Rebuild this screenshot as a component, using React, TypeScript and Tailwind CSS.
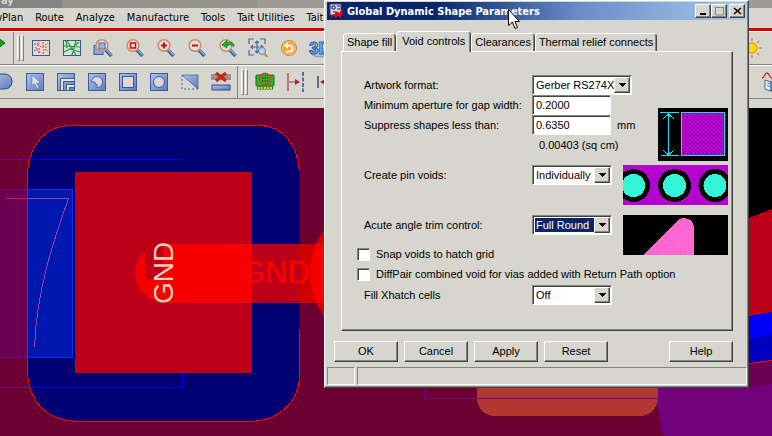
import type { ReactNode } from "react";

const RAISED =
  "border border-t-white border-l-white border-b-[#424242] border-r-[#424242] shadow-[inset_-1px_-1px_0_#848484]";
const SUNKEN =
  "border border-t-[#848484] border-l-[#848484] border-b-white border-r-white shadow-[inset_1px_1px_0_#424242]";

const MENU_ITEMS = ["Route", "Analyze", "Manufacture", "Tools", "Tait Utilities", "Tait C"];

export default function App() {
  return (
    <div className="relative flex h-screen flex-col overflow-hidden bg-[#6b0031] font-['Liberation_Sans',Arial,sans-serif] text-[11px] text-black">
      <header className="shrink-0 bg-[#d6d6ce]">
        <div className="flex h-2 overflow-hidden bg-[#9c9c94]">
          <span className="w-[62px] bg-[#848484] pl-px font-['DejaVu_Sans_Condensed','DejaVu_Sans',sans-serif] text-[11px] leading-[2px] font-bold text-[#d6d6ce]">
            ay
          </span>
          <span className="w-[195px] bg-[#94948a]" />
        </div>
        <nav className="flex h-5 items-center gap-3 font-['DejaVu_Sans_Condensed','DejaVu_Sans',sans-serif] text-[11px] whitespace-nowrap">
          <button type="button" className="-ml-1.5">
            wPlan
          </button>
          {MENU_ITEMS.map((item) => (
            <button key={item} type="button">
              {item}
            </button>
          ))}
        </nav>
        <div className="h-[3px] bg-[#d60000]" />
        <ViewToolbar />
        <ShapeToolbar />
        <div className="h-[9px]" />
      </header>

      <BoardCanvas />
      <ShapeParametersDialog />

      <svg className="absolute top-[9px] left-[508px]" width="12" height="21" viewBox="0 0 12 21">
        <path d="M.5.5v16l4-3.500 2.500 6.500 2.500-1-2.500-6h4.500z" fill="#fff" stroke="#000" />
      </svg>
    </div>
  );
}

/* ---------- toolbars ---------- */

function ViewToolbar() {
  return (
    <div className="flex h-[34px] items-center overflow-hidden border-t border-b border-t-white border-b-[#848484]">
      <button type="button" aria-label="Run" className="w-[13px] shrink-0 pb-2">
        <svg className="-ml-1.5" width="12" height="16" viewBox="0 0 12 16">
          <path d="M3 1l8 6-8 6v-4H0V5h3z" fill="#18a018" stroke="#086808" />
        </svg>
      </button>
      <Grip />
      <Tool label="Rats nest">
        <NetIcon color="#b84848" bg="#ead8d8" dashed />
      </Tool>
      <Tool label="Show etch">
        <NetIcon color="#28963c" bg="#d4e4d8" />
      </Tool>
      <Tool label="Zoom by points">
        <rect x="1" y="7.500" width="9" height="9" fill="#8fa5da" stroke="#3e5ca0" />
        <Lens>
          <rect x="6" y="5" width="6" height="6" fill="#9ab4e0" stroke="#4868a8" />
        </Lens>
      </Tool>
      <Tool label="Zoom fit">
        <Lens>
          <rect x="6.500" y="5" width="5" height="5" fill="none" stroke="#c81010" strokeWidth="1.500" />
        </Lens>
      </Tool>
      <Tool label="Zoom in">
        <Lens>
          <path d="M9 4.500v6M6 7.500h6" stroke="#c81010" strokeWidth="2" />
        </Lens>
      </Tool>
      <Tool label="Zoom out">
        <Lens>
          <path d="M6 7.500h6" stroke="#c81010" strokeWidth="2" />
        </Lens>
      </Tool>
      <Tool label="Zoom previous">
        <Lens>
          <path
            d="M5 7l5-5v2.500c4-1 7 0 7 4-2-2-4-2-7-1V10z"
            fill="#28a838"
            stroke="#107020"
            strokeWidth=".7"
          />
        </Lens>
      </Tool>
      <Tool label="Zoom selection">
        <path
          d="M1 6V1h5M12 1h5v5M1 12v5h5M9 3v12M3 9h12M7 5l2-2 2 2M7 13l2 2 2-2M5 7L3 9l2 2M13 7l2 2-2 2"
          fill="none"
          stroke="#4a6a9c"
          strokeWidth="1.200"
        />
        <circle cx="14" cy="13" r="3.500" fill="#b8d4f0" stroke="#6080a8" />
        <path d="M16.500 16l3 3" stroke="#c88840" strokeWidth="2" />
      </Tool>
      <Tool label="Redraw">
        <circle cx="10" cy="10" r="7.500" fill="#f5a03c" stroke="#c88030" />
        <circle cx="10" cy="10" r="6.500" fill="none" stroke="#fcd090" strokeWidth=".8" />
        <path d="M8 7.500h2.500a3 3 0 010 6H7" fill="none" stroke="#fff8ee" strokeWidth="2" />
        <path d="M5 7.500l4-3.500v7z" fill="#fff8ee" />
      </Tool>
      <Tool label="3D view">
        <ellipse cx="11" cy="15" rx="10" ry="4" fill="#a8bede" stroke="#7898c8" />
        <text x="-1" y="16" className="text-[17px] font-bold" fill="#90b8ec" stroke="#2860a8" strokeWidth="1">
          3D
        </text>
      </Tool>
      <span className="-mr-[11px] ml-auto flex shrink-0">
        <Tool label="Highlight">
          <circle cx="10" cy="10" r="5" fill="#ffd800" stroke="#d88a20" />
          <path
            d="M10 0v3M10 17v3M0 10h3M17 10h3M3 3l2 2M15 15l2 2M17 3l-2 2M3 17l2-2"
            stroke="#d88a20"
            strokeWidth="1.500"
          />
        </Tool>
        <span className="w-4" />
      </span>
    </div>
  );
}

function ShapeToolbar() {
  return (
    <div className="flex h-[34px] items-center overflow-hidden border-t border-b border-t-white border-b-[#848484]">
      <span className="-ml-3 flex shrink-0">
        <Tool label="Ellipse shape">
          <rect x="-2" y="2" width="20" height="15" rx="7" fill="url(#steel)" stroke="#284c94" />
        </Tool>
        <ShapeTool label="Select shape">
          <path d="M7 3v11l2.500-2.500 2.500 5 2-1-2.500-4.500h4z" fill="#e4e4e8" stroke="#5a70a4" strokeWidth=".6" />
        </ShapeTool>
        <ShapeTool label="Shape add">
          <path
            d="M4.500 18.500V6.500h14v3h-11v9zM10.500 18.500v-6h8v3h-5v3z"
            fill="#e8e4da"
            stroke="#34528f"
            strokeWidth=".9"
          />
        </ShapeTool>
        <ShapeTool label="Void polygon">
          <path
            d="M4.500 10A5.500 5.500 0 1110 15.500V12.500Q8 12.500 8 10z"
            fill="#dcd8dc"
            stroke="#3a5898"
            strokeWidth=".8"
          />
        </ShapeTool>
        <ShapeTool label="Void rectangle">
          <rect x="4.500" y="4.500" width="11" height="11" fill="#dcd8d8" stroke="#3a5898" />
        </ShapeTool>
        <ShapeTool label="Void circle">
          <circle cx="10" cy="10" r="5.500" fill="#d8d6da" stroke="#3a5898" />
        </ShapeTool>
        <Tool label="Edit boundary">
          <path d="M2 3h16v14z" fill="url(#steel)" stroke="#47629c" strokeWidth=".8" />
          <path d="M2 3v14h16" fill="none" stroke="#47629c" strokeDasharray="2 2" />
        </Tool>
        <Tool label="Delete islands">
          <path d="M0 2h20v6H0z" fill="#949490" />
          <path d="M5 1l10 8M15 1L5 9" stroke="#c82818" strokeWidth="3.500" />
          <rect x="1" y="13" width="18" height="5" fill="url(#steel)" stroke="#284c94" />
        </Tool>
      </span>
      <span className="ml-px shrink-0">
        <Grip />
      </span>
      <Tool label="DRC">
        <rect x="1" y="3" width="18" height="11" rx="1" fill="#28b828" stroke="#087008" />
        <path d="M2 16h16" stroke="#108010" strokeWidth="3" />
        <path d="M3 16h14" stroke="#e8d820" strokeWidth="2" strokeDasharray="2 1" />
        <path d="M7 6h6M7 9h6" stroke="#083808" strokeWidth="1.200" strokeDasharray="1.500 1" />
        <circle cx="10" cy="7" r="5.500" fill="none" stroke="#c84838" strokeWidth="1.800" />
      </Tool>
      <Tool label="Measure right">
        <path d="M2 1v18M3 10h8" stroke="#b03838" strokeWidth="1.200" />
        <path d="M9 7l5 3-5 3z" fill="#b02020" />
        <path d="M17 0v20" stroke="#2c4c90" strokeWidth="1.500" strokeDasharray="4 1.500" />
      </Tool>
      <Tool label="Measure left">
        <path d="M1 4v12" stroke="#2c4c90" strokeWidth="1.500" />
        <path d="M3 10l5-3v2h8v2H8v2z" fill="#b02020" />
      </Tool>
      <span className="-mr-[15px] ml-auto shrink-0">
        <Tool label="Waveform report">
          <path d="M0 6c3 0 2-5 5-5s2 6 6 5" fill="none" stroke="#c02828" strokeWidth="1.300" />
          <path d="M3 8l6 2v9l-6-2zM9 10l6-2v9l-6 2z" fill="#f4f8ff" stroke="#3c5c98" />
          <path d="M5 11l3 1M5 13.500l3 1" stroke="#4878c0" />
        </Tool>
      </span>
    </div>
  );
}

function Grip() {
  return (
    <span className="flex h-[34px] w-3 shrink-0 items-center gap-px border-l border-[#848484] pl-[3px]">
      <span className="h-[26px] w-[3px] border border-white border-r-[#848484] border-b-[#848484]" />
      <span className="h-[26px] w-[3px] border border-white border-r-[#848484] border-b-[#848484]" />
    </span>
  );
}

function Tool({ label, children }: { label: string; children: ReactNode }) {
  return (
    <button type="button" aria-label={label} className="flex w-[31px] shrink-0 justify-center">
      <svg className="overflow-visible" width="20" height="20" viewBox="0 0 20 20">
        <defs>
          <linearGradient id="steel" x1="0" y1="0" x2="1" y2="1">
            <stop offset="0" stopColor="#b2c2e2" />
            <stop offset="1" stopColor="#5c7cc0" />
          </linearGradient>
        </defs>
        {children}
      </svg>
    </button>
  );
}

function ShapeTool({ label, children }: { label: string; children: ReactNode }) {
  return (
    <Tool label={label}>
      <rect x="1.500" y="1.500" width="17" height="17" fill="url(#steel)" stroke="#3c5a9c" />
      {children}
    </Tool>
  );
}

function Lens({ children }: { children: ReactNode }) {
  return (
    <>
      <path d="M12.500 11.500l6 6.500" stroke="#3868a0" strokeWidth="3.500" />
      <path d="M13 11l5.500 6" stroke="#88b0d8" strokeWidth="1.200" />
      <circle cx="9" cy="7.500" r="5.800" fill="#e0dee4" stroke="#d0905c" strokeWidth="1.600" />
      {children}
    </>
  );
}

function NetIcon({ color, bg, dashed }: { color: string; bg: string; dashed?: boolean }) {
  return (
    <>
      <rect x="1.500" y="2.500" width="17" height="15" fill={bg} stroke="#3c5a88" />
      <path
        d={
          dashed
            ? "M3 6h4l3 3h7M3 13l5-3 1 6M12 4v4l5-3M4 9l4 6M12 16l1-5 4 2M8 4l-2 4"
            : "M2 8l16 1M5 3l9 14M14 3l-4 14M2 14l6-3 10 3M4 3l1 7M17 4l-7 6"
        }
        fill="none"
        stroke={color}
        strokeWidth={dashed ? 1 : 1.2}
        strokeDasharray={dashed ? "2 1" : undefined}
      />
    </>
  );
}

/* ---------- board ---------- */

function BoardCanvas() {
  const pad = "M68 125.500H262C283 128 297 143 299.500 171V379C297 403 280 419 253 421.500H75C46 419 30 402 27.500 375V171C30 145 45 127 68 125.500z";

  return (
    <svg className="block w-full shrink-0" viewBox="0 108 772 328" shapeRendering="crispEdges">
      <defs>
        <clipPath id="pad">
          <path d={pad} />
        </clipPath>
      </defs>
      <rect y="108" width="772" height="328" fill="#6b0031" />

      <rect y="189" width="28" height="169" fill="#6b0052" />
      <path d="M0 159.500H32M0 189.500H28M0 357.500H28M0 387.500H32" stroke="#730084" />
      <path d={pad} fill="#000073" />
      <g clipPath="url(#pad)">
        <path d="M0 159.500H183M0 387.500H182.500V373" fill="none" stroke="#0000e7" />
        <rect x="-1" y="189.500" width="73.500" height="168" fill="#0018ad" stroke="#0031ff" />
      </g>
      <path
        d="M68 125.500H262C283 128 297 143 299.500 171M299.500 329V379C297 403 280 419 253 421.500H75C46 419 30 402 27.500 375V171C30 145 45 127 68 125.500"
        fill="none"
        stroke="#ff0000"
      />
      <path d="M6 198.500H28" stroke="#bd2163" />
      <path d="M28 198.500H68.500C52 245 37 290 34.500 347" fill="none" stroke="#9c42ad" />

      <rect x="75" y="172" width="177" height="201" fill="#bd0018" />
      <path d="M252 244H300V303H252z" fill="#bd0018" />
      <path d="M300 244H325V303H300z" fill="#ce0000" />
      <circle cx="383" cy="273" r="73" fill="#d60000" />
      <path d="M163 244H252V303H165A30 30 0 01145 251V279H163z" fill="#f70000" />
      <path d="M145 251A30 30 0 00165 303V279H145z" fill="#f70000" />
      <path d="M316 244H325V303H316Q305 273 316 244z" fill="#f70000" />

      <text x="241" y="283" className="text-[31px]" fill="#ff0000">
        GND
      </text>
      <text x="-304" y="173" transform="rotate(-90)" className="text-[28px]" fill="#f7cebd">
        GND
      </text>

      <rect x="700" y="108" width="72" height="260" fill="#000000" />
      <path d="M700 237L749 218L772 209V312L749 317L700 330z" fill="#bd0018" />
      <path d="M700 330L749 316L772 312V335L749 339L700 348z" fill="#0000f7" />
      <path d="M700 348L749 339L772 335V360L749 363L700 372z" fill="#0000bd" />
      <path d="M700 372L749 363L772 360V385L700 388z" fill="#6b0052" />
      <path d="M749 363.500L772 360.500" stroke="#ff0000" />
      <rect x="477" y="370" width="181" height="46" rx="18" fill="#b03831" />
      <path d="M658 380H700C716 391 748 388 772 384V436H664C658 422 658 408 658 398z" fill="#73007b" />
      <path d="M424.500 385V398.500H658" fill="none" stroke="#730084" />
    </svg>
  );
}

/* ---------- dialog ---------- */

function ShapeParametersDialog() {
  return (
    <section
      role="dialog"
      aria-label="Global Dynamic Shape Parameters"
      className={`absolute top-0 left-[324px] flex w-[425px] flex-col bg-[#d6d6ce] pt-px pr-px pb-0.5 pl-0.5 leading-[13px] whitespace-nowrap ${RAISED}`}
    >
      <div className="flex h-[18px] items-center bg-linear-to-r from-[#0a246a] from-25% via-[#6b8cc6] via-60% to-[#a6caf0] pl-0.5">
        <svg width="16" height="16" viewBox="0 0 16 16">
          <rect x="1" y="1" width="11" height="11" fill="#d6d6e7" stroke="#42427b" />
          <path d="M3 3h3v3H3zM8 3h3M8 6h3M4 9h3v3" fill="none" stroke="#21215a" />
          <path d="M2 15l2-4h2l2-3 2 2 5-5-2 5h2l-3 2v3l-3-2-3 2v-3z" fill="#e70818" />
        </svg>
        <h1 className="ml-0.5 font-['DejaVu_Sans_Condensed','DejaVu_Sans',sans-serif] text-[11px] font-bold text-white">
          Global Dynamic Shape Parameters
        </h1>
        <div className="mr-0.5 ml-auto flex">
          <CaptionButton label="Minimize">
            <path d="M3 9h6" stroke="#000" strokeWidth="2" />
          </CaptionButton>
          <CaptionButton label="Maximize">
            <path d="M2.500 2v8h8V2M2 2.500h9" fill="none" stroke="#848484" />
          </CaptionButton>
          <span className="w-0.5" />
          <CaptionButton label="Close">
            <path d="M3 3l7 6M10 3L3 9" stroke="#000" strokeWidth="1.600" />
          </CaptionButton>
        </div>
      </div>

      <div role="tablist" className="mt-[11px] ml-4 flex items-end">
        <Tab label="Shape fill" />
        <Tab label="Void controls" selected />
        <Tab label="Clearances" />
        <Tab label="Thermal relief connects" />
      </div>

      <div className={`mx-3.5 flex h-[280px] flex-col pt-[23px] pr-1 pl-[22px] ${RAISED}`}>
        <div className="flex h-[90px] justify-between">
          <div>
            <SelectRow id="artwork" label="Artwork format:" value="Gerber RS274X" wide />
            <InputRow id="aperture" label="Minimum aperture for gap width:" value="0.2000" />
            <InputRow id="suppress" label="Suppress shapes less than:" value="0.6350" unit="mm" />
            <p className="ml-[175px] leading-5">0.00403 (sq cm)</p>
          </div>
          <MinAreaPicture />
        </div>
        <div className="flex h-[50px] justify-between">
          <SelectRow id="pin-voids" label="Create pin voids:" value="Individually" />
          <PinVoidPicture />
        </div>
        <div className="flex justify-between">
          <div>
            <SelectRow id="trim" label="Acute angle trim control:" value="Full Round" focused />
            <div className="h-[9px]" />
            <CheckRow id="snap" label="Snap voids to hatch grid" />
          </div>
          <TrimPicture />
        </div>
        <CheckRow id="diffpair" label="DiffPair combined void for vias added with Return Path option" />
        <div className="mt-px">
          <SelectRow id="xhatch" label="Fill Xhatch cells" value="Off" />
        </div>
      </div>

      <div className="mt-2.5 mr-3.5 ml-[7px] flex gap-1.5">
        <PushButton label="OK" />
        <PushButton label="Cancel" />
        <PushButton label="Apply" />
        <PushButton label="Reset" />
        <span className="grow" />
        <PushButton label="Help" />
      </div>

      <div className="mt-[5px] flex h-[18px] gap-0.5">
        <div className="w-7 border border-[#848484] border-r-white border-b-white" />
        <div className="grow border border-[#848484] border-r-white border-b-white" />
      </div>
    </section>
  );
}

function CaptionButton({ label, children }: { label: string; children: ReactNode }) {
  return (
    <button
      type="button"
      aria-label={label}
      className={`flex h-3.5 w-4 items-center justify-center bg-[#d6d6ce] ${RAISED}`}
    >
      <svg width="13" height="12" viewBox="0 0 13 12" className="shrink-0">
        {children}
      </svg>
    </button>
  );
}

function Tab({ label, selected = false }: { label: string; selected?: boolean }) {
  return (
    <button
      type="button"
      role="tab"
      aria-selected={selected}
      className={
        selected
          ? "relative -mb-px h-[21px] rounded-t-sm border border-b-0 border-t-white border-l-white border-r-[#424242] bg-[#d6d6ce] px-[5px] pb-0.5 shadow-[inset_-1px_0_0_#848484]"
          : "h-[18px] rounded-t-sm border border-b-0 border-t-white border-l-white border-r-[#424242] px-[3px] shadow-[inset_-1px_0_0_#848484]"
      }
    >
      {label}
    </button>
  );
}

interface RowProps {
  id: string;
  label: string;
  value: string;
}

function SelectRow({ id, label, value, wide, focused }: RowProps & { wide?: boolean; focused?: boolean }) {
  return (
    <div className="flex h-5 items-center">
      <label htmlFor={id} className="w-[168px]">
        {label}
      </label>
      <div className={`relative h-5 bg-white p-px ${wide ? "w-[100px]" : "w-20"} ${SUNKEN}`}>
        <select
          id={id}
          defaultValue={value}
          className={`block h-full w-full appearance-none border border-white pl-px leading-[13px] outline-none ${
            focused ? "bg-[#0a246a] text-white" : "bg-white"
          }`}
        >
          <option>{value}</option>
        </select>
        <span
          className={`pointer-events-none absolute top-px right-px bottom-px flex w-4 items-center justify-center bg-[#d6d6ce] ${RAISED}`}
        >
          <svg width="7" height="4" viewBox="0 0 7 4" shapeRendering="crispEdges">
            <path d="M0 0h7L3.500 4z" />
          </svg>
        </span>
      </div>
    </div>
  );
}

function InputRow({ id, label, value, unit }: RowProps & { unit?: string }) {
  return (
    <div className="flex h-5 items-center">
      <label htmlFor={id} className="w-[168px]">
        {label}
      </label>
      <input id={id} defaultValue={value} className={`h-5 w-[79px] bg-white px-[3px] outline-none ${SUNKEN}`} />
      {unit && <span className="ml-1.5">{unit}</span>}
    </div>
  );
}

function CheckRow({ id, label }: { id: string; label: string }) {
  return (
    <div className="-ml-[7px] flex h-5 items-center gap-1.5">
      <input id={id} type="checkbox" className={`h-[13px] w-[13px] appearance-none bg-white ${SUNKEN}`} />
      <label htmlFor={id}>{label}</label>
    </div>
  );
}

function PushButton({ label }: { label: string }) {
  return (
    <button type="button" className={`h-[21px] w-16 bg-[#d6d6ce] ${RAISED}`}>
      {label}
    </button>
  );
}

/* ---------- option pictures ---------- */

function MinAreaPicture() {
  return (
    <svg className="mt-[33px] shrink-0" width="70" height="53" viewBox="0 0 70 53" shapeRendering="crispEdges">
      <defs>
        <pattern id="dots" width="4" height="4" patternUnits="userSpaceOnUse">
          <rect width="4" height="4" fill="#b500ce" />
          <path d="M1 1h1v1H1zM3 3h1v1H3z" fill="#000" />
        </pattern>
      </defs>
      <rect width="70" height="53" fill="#000" />
      <rect x="23.500" y="4.500" width="43" height="43" fill="url(#dots)" stroke="#00e7ff" />
      <path d="M2 4.500h19M3 47.500h18M10.500 6v41M5 11l5.500-5 5.500 5M5 42l5.500 5 5.500-5" fill="none" stroke="#00e7ff" />
    </svg>
  );
}

function PinVoidPicture() {
  return (
    <svg className="shrink-0" width="105" height="40" viewBox="0 0 105 40" shapeRendering="crispEdges">
      <rect width="105" height="40" fill="#b500ce" />
      {[10.5, 51.5, 92].map((cx) => (
        <circle key={cx} cx={cx} cy="20.500" r="14" fill="#31f7d6" stroke="#000" strokeWidth="5" />
      ))}
    </svg>
  );
}

function TrimPicture() {
  return (
    <svg className="shrink-0" width="105" height="40" viewBox="0 0 105 40" shapeRendering="crispEdges">
      <defs>
        <pattern id="dither" width="2" height="2" patternUnits="userSpaceOnUse">
          <rect width="2" height="2" fill="#ff63ce" />
          <path d="M0 0h1v1H0z" fill="#ff8ca5" />
        </pattern>
      </defs>
      <rect width="105" height="40" fill="#000" />
      <path d="M21 40L53 7Q57 3 61 3Q70 4 71 12V40z" fill="url(#dither)" />
    </svg>
  );
}
